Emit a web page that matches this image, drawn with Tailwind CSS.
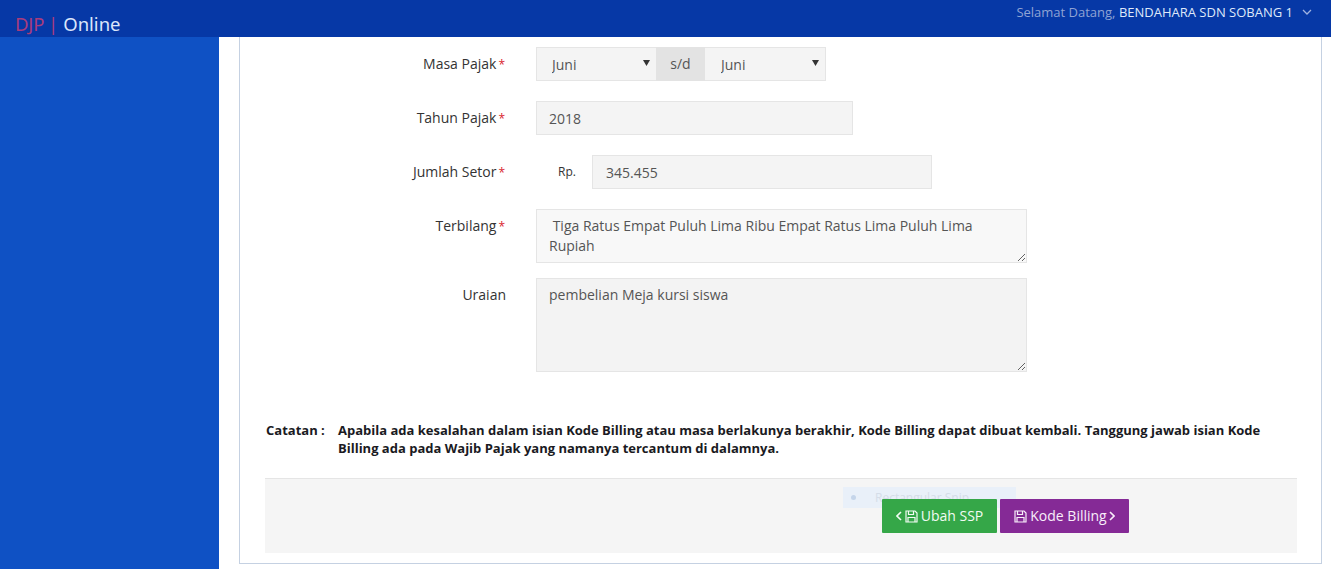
<!DOCTYPE html>
<html lang="en">
<head>
    <meta charset="UTF-8">
    <meta name="viewport" content="width=device-width, initial-scale=1.0">
    <title>DJP Online - Kode Billing</title>
    <script src="https://cdn.jsdelivr.net/npm/@tailwindcss/browser@4"></script>
</head>
<body class="h-screen overflow-hidden bg-white font-['Open_Sans',sans-serif] text-[14px] text-[#333]">
    <!-- Top bar -->
    <header class="h-[37px] bg-[#0638a6] flex justify-between relative z-10">
      <div class="pl-[15px] pt-[10px] text-[18.5px] leading-[27px] font-['Noto_Sans',sans-serif] flex">
        <span class="text-[#a93c7c] w-[31px] tracking-[-0.2px]">DJP</span>
        <span class="text-[#a93c7c] ml-[2px] mr-[5px]">|</span>
        <span class="text-[#dbe6fa]">Online</span>
      </div>
      <div class="flex items-start pt-[3px] pr-[19px] text-[13px] leading-[19px]">
        <span class="text-[#8fa3d4]">Selamat Datang,&nbsp;</span>
        <span class="text-[#dfe8fa]">BENDAHARA SDN SOBANG 1</span>
        <svg class="ml-[9px] mt-[6px]" width="10" height="7" viewBox="0 0 10 7" fill="none" stroke="#9fb2e0" stroke-width="1.3"><path d="M1 1l4 4 4-4"/></svg>
      </div>
    </header>

    <div class="flex h-[532px]">
      <aside class="w-[219px] bg-[#0f51c4] shrink-0"></aside>
      <main class="flex-1 pl-[20px] pr-[9px] pb-[5px]">
        <div class="h-full border border-t-0 border-[#c5d1e2] pl-[25px] pr-[24px] pt-[10px] relative">
          <!-- Form rows -->
          <div class="flex h-[34px] mb-[20px]">
            <label class="w-[240px] text-right pt-[7px] leading-[20px]">Masa Pajak<span class="text-[#d9232e] text-[12px] ml-[2px]">*</span></label>
            <div class="ml-[31px] flex">
              <div class="relative w-[120px]">
                <select class="w-full h-[34px] appearance-none bg-[#f4f4f4] border border-[#e5e5e5] border-r-0 pl-[15px] text-[#555]"><option>Juni</option></select>
                <svg class="absolute right-[6px] top-[13px]" width="7" height="6" viewBox="0 0 7 6" fill="#333"><path d="M0 0h7L3.5 6z"/></svg>
              </div>
              <div class="w-[49px] h-[34px] bg-[#e3e3e3] text-center leading-[33px] text-[#555]">s/d</div>
              <div class="relative w-[121px]">
                <select class="w-full h-[34px] appearance-none bg-[#f4f4f4] border border-[#e5e5e5] border-l-0 pl-[16px] text-[#555]"><option>Juni</option></select>
                <svg class="absolute right-[7px] top-[13px]" width="7" height="6" viewBox="0 0 7 6" fill="#333"><path d="M0 0h7L3.5 6z"/></svg>
              </div>
            </div>
          </div>
          <div class="flex h-[34px] mb-[20px]">
            <label class="w-[240px] text-right pt-[7px] leading-[20px]">Tahun Pajak<span class="text-[#d9232e] text-[12px] ml-[2px]">*</span></label>
            <input class="ml-[31px] w-[317px] h-[34px] bg-[#f4f4f4] border border-[#e5e5e5] px-[12px] text-[#555]" value="2018">
          </div>
          <div class="flex h-[34px] mb-[20px]">
            <label class="w-[240px] text-right pt-[7px] leading-[20px]">Jumlah Setor<span class="text-[#d9232e] text-[12px] ml-[2px]">*</span></label>
            <span class="ml-[53px] w-[34px] pt-[7px] leading-[20px] text-[12px]">Rp.</span>
            <input class="w-[340px] h-[34px] bg-[#f4f4f4] border border-[#e5e5e5] px-[13px] text-[#555]" value="345.455">
          </div>
          <div class="flex h-[54px] mb-[15px]">
            <label class="w-[240px] text-right pt-[7px] leading-[20px]">Terbilang<span class="text-[#d9232e] text-[12px] ml-[2px]">*</span></label>
            <textarea class="ml-[31px] w-[491px] h-[54px] bg-[#f8f8f8] border border-[#e5e5e5] px-[12px] py-[6px] leading-[20px] text-[#555]"> Tiga Ratus Empat Puluh Lima Ribu Empat Ratus Lima Puluh Lima Rupiah</textarea>
          </div>
          <div class="flex h-[94px] mb-[49px]">
            <label class="w-[241px] text-right pt-[7px] leading-[20px]">Uraian</label>
            <textarea class="ml-[30px] w-[491px] h-[94px] bg-[#f3f3f3] border border-[#e5e5e5] px-[12px] py-[6px] leading-[20px] text-[#555]">pembelian Meja kursi siswa</textarea>
          </div>

          <!-- Catatan -->
          <div class="flex text-[13px] leading-[18px] font-bold text-[#1a1a22] pl-[1px]">
            <span class="w-[72px] shrink-0">Catatan :</span>
            <p class="w-[950px]">Apabila ada kesalahan dalam isian Kode Billing atau masa berlakunya berakhir, Kode Billing dapat dibuat kembali. Tanggung jawab isian Kode Billing ada pada Wajib Pajak yang namanya tercantum di dalamnya.</p>
          </div>

          <!-- Footer bar -->
          <div class="mt-[21px] h-[75px] bg-[#f5f5f5] border-t border-[#e5e5e5] relative flex justify-end pt-[20px] pr-[168px] gap-[3px]">
            <!-- snipping tool tooltip left behind in the capture -->
            <div class="absolute left-[578px] top-[8px] w-[173px] h-[21px] bg-[#e9f0f9] flex items-center pl-[8px] text-[12px] text-[#d5dde8]">
              <span class="w-[5px] h-[5px] rounded-full bg-[#c5d5ea] mr-[19px]"></span>Rectangular Snip
            </div>
            <button class="relative w-[115px] h-[34px] bg-[#35a748] text-[#f2fbf3] flex items-center justify-center gap-[2px] rounded-[1px]">
              <svg width="6" height="10" viewBox="0 0 6 10" fill="none" stroke="currentColor" stroke-width="1.6"><path d="M5 1L1 5l4 4"/></svg>
              <svg class="ml-[1px]" width="13" height="13" viewBox="0 0 13 13" fill="none" stroke="currentColor" stroke-width="1.2"><path d="M1 1h9l2 2v9H1z"/><path d="M3.5 1v3.5h5V1M3 12V7.5h7V12"/></svg>
              <span class="ml-[1px] -mt-[2px]">Ubah SSP</span>
            </button>
            <button class="relative w-[129px] h-[34px] bg-[#852a96] text-[#f8eefa] flex items-center justify-center gap-[2px] rounded-[1px]">
              <svg width="13" height="13" viewBox="0 0 13 13" fill="none" stroke="currentColor" stroke-width="1.2"><path d="M1 1h9l2 2v9H1z"/><path d="M3.5 1v3.5h5V1M3 12V7.5h7V12"/></svg>
              <span class="ml-[1px] -mt-[2px]">Kode Billing</span>
              <svg width="6" height="10" viewBox="0 0 6 10" fill="none" stroke="currentColor" stroke-width="1.6"><path d="M1 1l4 4-4 4"/></svg>
            </button>
          </div>
        </div>
      </main>
    </div>
</body>
</html>
